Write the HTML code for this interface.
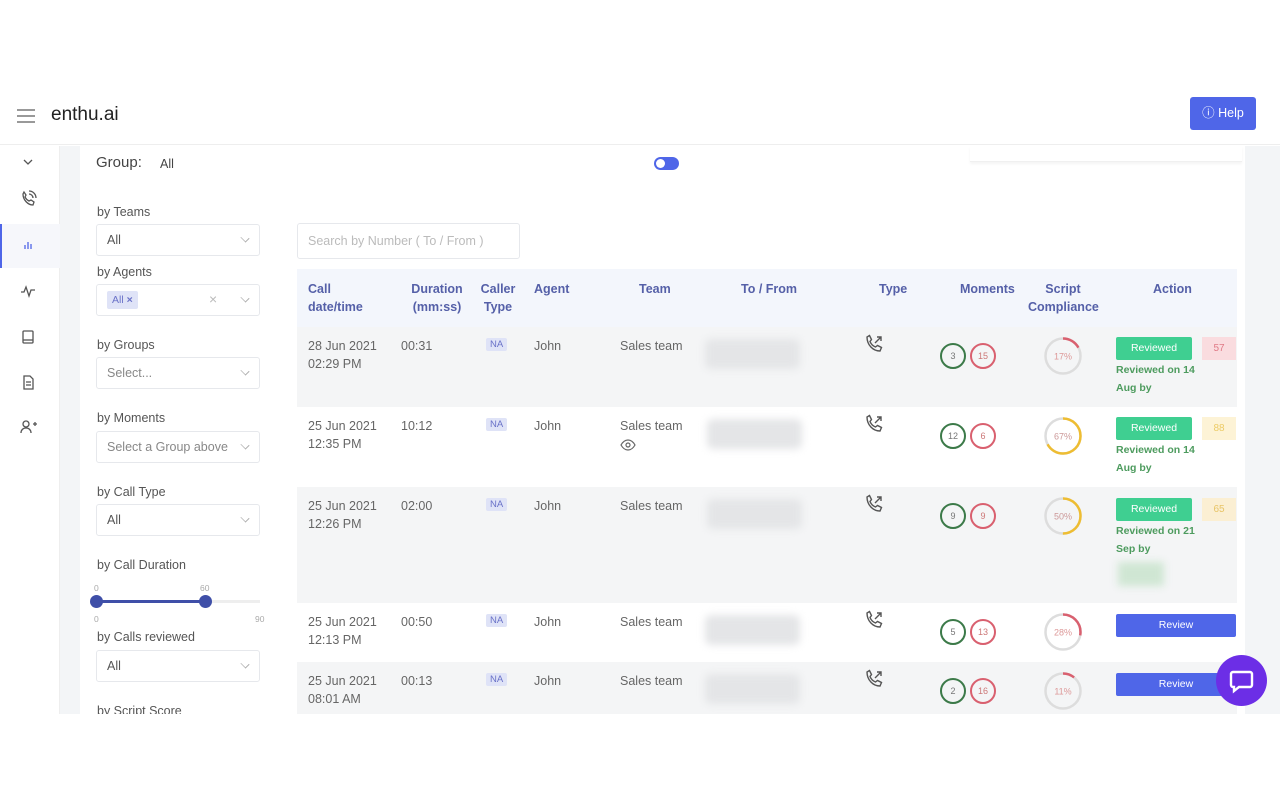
<!DOCTYPE html>
<html><head><style>
*{box-sizing:border-box;margin:0;padding:0}
body{width:1280px;height:800px;position:relative;background:#fff;font-family:"Liberation Sans",sans-serif;color:#555;overflow:hidden}
.a{position:absolute}
.lbl{position:absolute;left:97px;font-size:12.5px;color:#555}
.sel{position:absolute;left:96px;width:164px;height:32px;border:1px solid #e6e8ec;border-radius:3px;font-size:12.5px;color:#555;padding:8px 10px;background:#fff}
.sel .chev{position:absolute;right:10px;top:9px;width:8px;height:8px;border-right:1.3px solid #aaa;border-bottom:1.3px solid #aaa;transform:rotate(45deg) scale(.9,.7)}
.row{position:absolute;left:297px;width:940px}
.t{position:absolute;font-size:12.5px;color:#666;line-height:18px}
.na{position:absolute;font-size:9.5px;color:#6a72c8;background:#dfe3f7;padding:1px 4px;border-radius:2px}
.blur{position:absolute;width:95px;height:30px;background:#e4e5e7;filter:blur(4px);border-radius:6px}
.mc{position:absolute;width:26px;height:26px;border-radius:50%;font-size:9px;text-align:center;line-height:22px}
.g{border:2px solid #3c7a49;color:#777}
.r{border:2px solid #d9606f;color:#c77}
.rev{position:absolute;left:1116px;width:76px;height:23px;background:#3fcf91;color:#fff;font-size:10.5px;text-align:center;line-height:23px;border-radius:2px}
.rtx{position:absolute;left:1116px;font-size:10.5px;color:#4d9b5e;font-weight:bold;line-height:18px}
.sc{position:absolute;left:1202px;width:34px;height:23px;font-size:10px;text-align:center;line-height:23px}
.rvb{position:absolute;left:1116px;width:120px;height:23px;background:#4f66e8;color:#fff;font-size:10.5px;text-align:center;line-height:23px;border-radius:2px}
.th{position:absolute;font-size:12.5px;color:#5560a8;font-weight:bold;line-height:18px}
</style></head><body>
<!-- header -->
<div class="a" style="left:0;top:90px;width:1280px;height:55px;background:#fff;border-bottom:1px solid #eee"></div>
<div class="a" style="left:17px;top:109px;width:18px;height:2px;background:#999;box-shadow:0 6px 0 #999,0 12px 0 #999"></div>
<div class="a" style="left:51px;top:104px;font-size:19px;color:#222">enthu.ai</div>
<div class="a" style="left:1190px;top:97px;width:66px;height:33px;background:#4f66e8;border-radius:3px;color:#fff;font-size:12.5px;line-height:33px;text-align:center">&#9432; Help</div>
<!-- sidebar -->
<div class="a" style="left:0;top:146px;width:60px;height:568px;background:#fff;border-right:1px solid #eee"></div>
<div class="a" style="left:60px;top:146px;width:20px;height:568px;background:#f3f5f7"></div>
<div class="a" style="left:1245px;top:146px;width:35px;height:568px;background:#f3f5f7"></div>
<div class="a" style="left:0;top:224px;width:60px;height:44px;background:#f6f7fb"></div>
<div class="a" style="left:0;top:224px;width:2px;height:44px;background:#4f66e8"></div>
<svg class="a" style="left:18px;top:152px" width="20" height="300" fill="none" stroke="#555" stroke-width="1.3">
<path d="M6 8l4 4 4-4"/>
<path d="M5 42c0 6 5 11 10 11l1-3-3-2-2 1c-2-1-3-2-4-4l1-2-2-3z"/><path d="M11 42a4 4 0 0 1 4 4M11 39a7 7 0 0 1 7 7"/>
<path d="M7 97v-4M10 97v-7M13 97v-5" stroke="#4f66e8"/>
<path d="M3 140h3l2-5 3 9 2-6h4"/>
<rect x="5" y="179" width="10" height="12" rx="1"/><path d="M5 188h10"/>
<path d="M6 224h6l3 3v10H6z M8 230h5M8 233h5"/>
<circle cx="8" cy="272" r="3"/><path d="M3 281c0-3 2-5 5-5s5 2 5 5M15 272h4M17 270v4"/>
</svg>
<!-- top panel -->
<div class="a" style="left:96px;top:154px;font-size:15px;color:#444">Group:</div>
<div class="a" style="left:160px;top:157px;font-size:12.5px;color:#444">All</div>
<div class="a" style="left:654px;top:157px;width:25px;height:13px;border-radius:7px;background:#4f66e8"></div>
<div class="a" style="left:656px;top:159px;width:9px;height:9px;border-radius:50%;background:#fff"></div>
<div class="a" style="left:970px;top:146px;width:272px;height:16px;border-bottom:1px solid #f0f0f0;box-shadow:0 2px 3px #f4f4f4"></div>
<!-- filters -->
<div class="lbl" style="top:205px">by Teams</div>
<div class="sel" style="top:224px">All<span class="chev"></span></div>
<div class="lbl" style="top:265px">by Agents</div>
<div class="sel" style="top:284px;padding:7px 10px"><span style="background:#dfe3f7;color:#6a72c8;font-size:10.5px;padding:3px 5px;border-radius:2px">All <b>×</b></span><span style="position:absolute;left:112px;top:6px;color:#bbb;font-size:14px">×</span><span class="chev"></span></div>
<div class="lbl" style="top:338px">by Groups</div>
<div class="sel" style="top:357px;color:#888">Select...<span class="chev"></span></div>
<div class="lbl" style="top:411px">by Moments</div>
<div class="sel" style="top:431px;color:#888">Select a Group above<span class="chev"></span></div>
<div class="lbl" style="top:485px">by Call Type</div>
<div class="sel" style="top:504px">All<span class="chev"></span></div>
<div class="lbl" style="top:558px">by Call Duration</div>
<div class="a" style="left:94px;top:583px;font-size:8.5px;color:#aaa">0</div>
<div class="a" style="left:200px;top:583px;font-size:8.5px;color:#aaa">60</div>
<div class="a" style="left:96px;top:600px;width:164px;height:3px;background:#eee"></div>
<div class="a" style="left:96px;top:600px;width:110px;height:3px;background:#3f4fa8"></div>
<div class="a" style="left:90px;top:595px;width:13px;height:13px;border-radius:50%;background:#3f4fa8"></div>
<div class="a" style="left:199px;top:595px;width:13px;height:13px;border-radius:50%;background:#3f4fa8"></div>
<div class="a" style="left:94px;top:614px;font-size:8.5px;color:#aaa">0</div>
<div class="a" style="left:255px;top:614px;font-size:8.5px;color:#aaa">90</div>
<div class="lbl" style="top:630px">by Calls reviewed</div>
<div class="sel" style="top:650px">All<span class="chev"></span></div>
<div class="lbl" style="top:704px">by Script Score</div>
<!-- search -->
<div class="a" style="left:297px;top:223px;width:223px;height:36px;border:1px solid #e6e8ec;border-radius:3px;font-size:12.5px;color:#bbb;padding:10px"> Search by Number ( To / From )</div>
<!-- table header -->
<div class="row" style="top:269px;height:58px;background:#f3f6fc"></div>
<div class="th" style="left:308px;top:280px">Call<br>date/time</div>
<div class="th" style="left:405px;top:280px;text-align:center;width:64px">Duration<br>(mm:ss)</div>
<div class="th" style="left:478px;top:280px;text-align:center;width:40px">Caller<br>Type</div>
<div class="th" style="left:534px;top:280px">Agent</div>
<div class="th" style="left:639px;top:280px">Team</div>
<div class="th" style="left:741px;top:280px">To / From</div>
<div class="th" style="left:879px;top:280px">Type</div>
<div class="th" style="left:960px;top:280px">Moments</div>
<div class="th" style="left:1028px;top:280px;text-align:center;width:70px">Script<br>Compliance</div>
<div class="th" style="left:1153px;top:280px">Action</div>
<!-- rows bg -->
<div class="row" style="top:327px;height:80px;background:#f4f5f6"></div>
<div class="row" style="top:487px;height:116px;background:#f4f5f6"></div>
<div class="row" style="top:662px;height:52px;background:#f4f5f6"></div>

<div class="t" style="left:308px;top:337px">28 Jun 2021<br>02:29 PM</div><div class="t" style="left:401px;top:337px">00:31</div><span class="na" style="left:486px;top:338px">NA</span><div class="t" style="left:534px;top:337px">John</div><div class="t" style="left:620px;top:337px">Sales team</div><div class="blur" style="left:705px;top:339px"></div>
<div class="t" style="left:308px;top:417px">25 Jun 2021<br>12:35 PM</div><div class="t" style="left:401px;top:417px">10:12</div><span class="na" style="left:486px;top:418px">NA</span><div class="t" style="left:534px;top:417px">John</div><div class="t" style="left:620px;top:417px">Sales team</div>
<svg class="a" style="left:620px;top:439px" width="16" height="12" fill="none" stroke="#666" stroke-width="1.2"><path d="M1 6c2-3.5 4.5-5 7-5s5 1.5 7 5c-2 3.5-4.5 5-7 5S3 9.5 1 6z"/><circle cx="8" cy="6" r="2"/></svg>
<div class="blur" style="left:707px;top:419px"></div>
<div class="t" style="left:308px;top:497px">25 Jun 2021<br>12:26 PM</div><div class="t" style="left:401px;top:497px">02:00</div><span class="na" style="left:486px;top:498px">NA</span><div class="t" style="left:534px;top:497px">John</div><div class="t" style="left:620px;top:497px">Sales team</div><div class="blur" style="left:707px;top:499px"></div>
<div class="t" style="left:308px;top:613px">25 Jun 2021<br>12:13 PM</div><div class="t" style="left:401px;top:613px">00:50</div><span class="na" style="left:486px;top:614px">NA</span><div class="t" style="left:534px;top:613px">John</div><div class="t" style="left:620px;top:613px">Sales team</div><div class="blur" style="left:705px;top:615px"></div>
<div class="t" style="left:308px;top:672px">25 Jun 2021<br>08:01 AM</div><div class="t" style="left:401px;top:672px">00:13</div><span class="na" style="left:486px;top:673px">NA</span><div class="t" style="left:534px;top:672px">John</div><div class="t" style="left:620px;top:672px">Sales team</div><div class="blur" style="left:705px;top:674px"></div>

<svg class="a" style="left:860px;top:330px" width="240" height="384" fill="none" stroke-width="1.4">
<defs><g id="ph"><path d="M7 7c0 8 6 14 13 14l1.5-3.5-4-2-2 1.5c-2.5-1-4.5-3-5.5-5.5l1.5-2-2-4z" stroke="#555"/><path d="M15 13l6-6M17 7h4v4" stroke="#555"/></g></defs>
<use href="#ph" x="0" y="0"/><use href="#ph" x="0" y="80"/><use href="#ph" x="0" y="160"/><use href="#ph" x="0" y="276"/><use href="#ph" x="0" y="335"/>
<g transform="translate(203,26)"><circle r="17.5" stroke="#ddd" stroke-width="2.5"/><circle r="17.5" stroke="#d9606f" stroke-width="2.5" stroke-dasharray="18.7 200" transform="rotate(-90)"/><text y="3.5" text-anchor="middle" font-size="9" fill="#d99" stroke="none" font-family="Liberation Sans">17%</text></g>
<g transform="translate(203,106)"><circle r="17.5" stroke="#ddd" stroke-width="2.5"/><circle r="17.5" stroke="#eebd32" stroke-width="2.5" stroke-dasharray="73.7 200" transform="rotate(-90)"/><text y="3.5" text-anchor="middle" font-size="9" fill="#c99" stroke="none" font-family="Liberation Sans">67%</text></g>
<g transform="translate(203,186)"><circle r="17.5" stroke="#ddd" stroke-width="2.5"/><circle r="17.5" stroke="#eebd32" stroke-width="2.5" stroke-dasharray="55 200" transform="rotate(-90)"/><text y="3.5" text-anchor="middle" font-size="9" fill="#c99" stroke="none" font-family="Liberation Sans">50%</text></g>
<g transform="translate(203,302)"><circle r="17.5" stroke="#ddd" stroke-width="2.5"/><circle r="17.5" stroke="#d9606f" stroke-width="2.5" stroke-dasharray="30.8 200" transform="rotate(-90)"/><text y="3.5" text-anchor="middle" font-size="9" fill="#d99" stroke="none" font-family="Liberation Sans">28%</text></g>
<g transform="translate(203,361)"><circle r="17.5" stroke="#ddd" stroke-width="2.5"/><circle r="17.5" stroke="#d9606f" stroke-width="2.5" stroke-dasharray="12 200" transform="rotate(-90)"/><text y="3.5" text-anchor="middle" font-size="9" fill="#d99" stroke="none" font-family="Liberation Sans">11%</text></g>
</svg>
<div class="mc g" style="left:940px;top:343px">3</div><div class="mc r" style="left:970px;top:343px">15</div>
<div class="mc g" style="left:940px;top:423px">12</div><div class="mc r" style="left:970px;top:423px">6</div>
<div class="mc g" style="left:940px;top:503px">9</div><div class="mc r" style="left:970px;top:503px">9</div>
<div class="mc g" style="left:940px;top:619px">5</div><div class="mc r" style="left:970px;top:619px">13</div>
<div class="mc g" style="left:940px;top:678px">2</div><div class="mc r" style="left:970px;top:678px">16</div>
<div class="rev" style="top:337px">Reviewed</div><div class="rtx" style="top:361px">Reviewed on 14<br>Aug by</div><div class="sc" style="top:337px;background:#fadcdf;color:#e07a86">57</div>
<div class="rev" style="top:417px">Reviewed</div><div class="rtx" style="top:441px">Reviewed on 14<br>Aug by</div><div class="sc" style="top:417px;background:#fdf3d6;color:#eccb66">88</div>
<div class="rev" style="top:498px">Reviewed</div><div class="rtx" style="top:522px">Reviewed on 21<br>Sep by</div><div class="sc" style="top:498px;background:#fbefd3;color:#e8c466">65</div>
<div class="a" style="left:1118px;top:562px;width:46px;height:24px;background:#cfe6d3;filter:blur(4px)"></div>
<div class="rvb" style="top:614px">Review</div>
<div class="rvb" style="top:673px">Review</div>
<!-- bottom white clip -->
<div class="a" style="left:0;top:714px;width:1280px;height:86px;background:#fff"></div>
<!-- chat -->
<div class="a" style="left:1216px;top:655px;width:51px;height:51px;border-radius:50%;background:#6c2ee6"></div>
<svg class="a" style="left:1228px;top:667px" width="28" height="28" fill="none" stroke="#fff" stroke-width="2.4"><path d="M5 5h17a2 2 0 0 1 2 2v11a2 2 0 0 1-2 2H11l-5 4v-4H5a2 2 0 0 1-2-2V7a2 2 0 0 1 2-2z"/></svg>
</body></html>
